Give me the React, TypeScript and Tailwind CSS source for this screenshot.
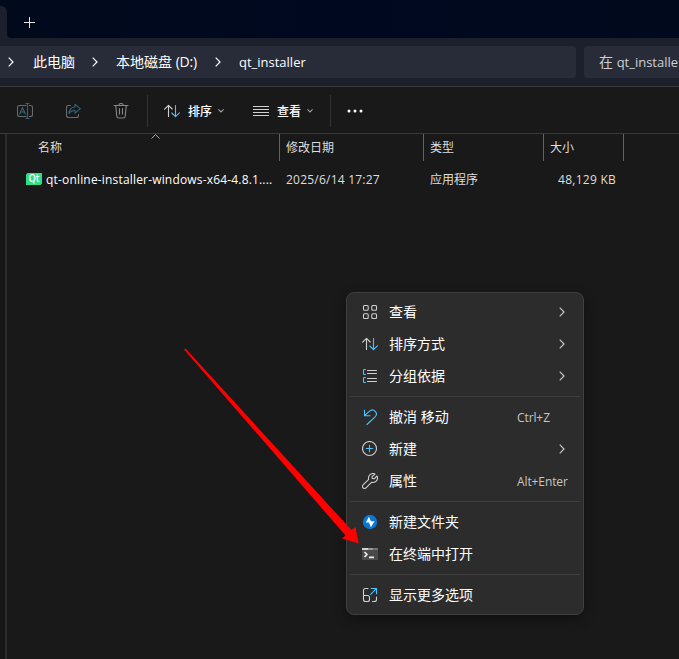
import type { ReactNode } from 'react';

interface MenuItemProps {
  icon: ReactNode;
  label: string;
  shortcut?: string;
  submenu?: boolean;
}

function Chevron({ className }: { className?: string }) {
  return (
    <svg className={className} width="6" height="10" viewBox="0 0 6 10" fill="none" stroke="currentColor" strokeWidth="1.2">
      <path d="M0.7 0.7L5 5L0.7 9.3" />
    </svg>
  );
}

function ChevronDown() {
  return (
    <svg className="ml-1.5 text-[#a0a0a0]" width="6" height="4" viewBox="0 0 6 4" fill="none" stroke="currentColor" strokeWidth="1.1">
      <path d="M0.4 0.4L3 3L5.6 0.4" />
    </svg>
  );
}

function Icon({ children, className }: { children: ReactNode; className?: string }) {
  return (
    <svg
      className={`shrink-0 ${className ?? ''}`}
      width="16"
      height="16"
      viewBox="0 0 16 16"
      fill="none"
      stroke="#d0d0d0"
      strokeWidth="1.1"
      strokeLinecap="round"
      strokeLinejoin="round"
    >
      {children}
    </svg>
  );
}

function SortIcon({ className }: { className?: string }) {
  return (
    <Icon className={className}>
      <path d="M4.5 13.5V2.3M0.6 6.2L4.5 2.3L8.2 6" />
      <path d="M11.5 2.5V13.7M7.8 10L11.5 13.7L15.4 9.8" stroke="#4cc2ff" />
    </Icon>
  );
}

function MenuItem({ icon, label, shortcut, submenu }: MenuItemProps) {
  return (
    <div className="flex h-8 items-center pl-[15px] pr-[18px] text-white">
      {icon}
      <span className="ml-[11px] whitespace-nowrap text-sm leading-5">{label}</span>
      {shortcut && (
        <span className="-mr-0.5 ml-auto w-[50px] whitespace-nowrap pt-px text-xs tracking-[-0.1px] text-[#c6c6c6]">{shortcut}</span>
      )}
      {submenu && <Chevron className="ml-auto text-[#c6c6c6]" />}
    </div>
  );
}

function Separator() {
  return <div className="mx-[3px] my-1 h-px bg-[#3f3f3f]" />;
}

function ContextMenu() {
  return (
    <div className="absolute left-[346px] top-[292px] w-[238px] rounded-lg border border-[#404040] bg-[#2c2c2c] py-[3px] shadow-[0_4px_12px_rgba(0,0,0,0.35)]">
      <MenuItem
        label="查看"
        submenu
        icon={
          <Icon>
            <rect x="1.5" y="1.5" width="4.7" height="4.7" rx="1" />
            <rect x="9.8" y="1.5" width="4.7" height="4.7" rx="1" />
            <rect x="1.5" y="9.8" width="4.7" height="4.7" rx="1" />
            <rect x="9.8" y="9.8" width="4.7" height="4.7" rx="1" />
          </Icon>
        }
      />
      <MenuItem label="排序方式" submenu icon={<SortIcon />} />
      <MenuItem
        label="分组依据"
        submenu
        icon={
          <Icon>
            <path d="M5.5 2.5H14.5M5.5 5.5H14.5M5.5 10.5H14.5M5.5 13.5H14.5" />
            <path d="M3.5 1.5H2.3Q1.5 1.5 1.5 2.3V5.7Q1.5 6.5 2.3 6.5H3.5M3.5 9.5H2.3Q1.5 9.5 1.5 10.3V13.7Q1.5 14.5 2.3 14.5H3.5" stroke="#4cc2ff" />
          </Icon>
        }
      />
      <Separator />
      <MenuItem
        label="撤消 移动"
        shortcut="Ctrl+Z"
        icon={
          <Icon>
            <path d="M2.5 1.2V6.7H8M2.8 6.3L7.2 2.3C9.2 0.5 11.7 0.7 13.2 2.3C14.8 4 14.7 6.3 13.1 7.9L5 15.5" stroke="#4cc2ff" />
          </Icon>
        }
      />
      <MenuItem
        label="新建"
        submenu
        icon={
          <Icon>
            <circle cx="7.5" cy="7.5" r="7" />
            <path d="M7.5 4.3V10.7M4.3 7.5H10.7" stroke="#4cc2ff" />
          </Icon>
        }
      />
      <MenuItem
        label="属性"
        shortcut="Alt+Enter"
        icon={
          <Icon>
            <path d="M13 1.1A4.4 4.4 0 0 0 6.7 6.3L1.1 11.9A2 2 0 0 0 4 14.9L9.7 9.2A4.4 4.4 0 0 0 15 3L12.1 5.8L10.2 5.4L9.9 3.9Z" />
          </Icon>
        }
      />
      <Separator />
      <MenuItem
        label="新建文件夹"
        icon={
          <Icon>
            <circle cx="8" cy="8" r="7.2" fill="#0878d4" stroke="none" />
            <path d="M7 2.8L3.8 8.6H7L8.9 13.2L12.5 7.3H9Z" fill="#fff" stroke="none" />
          </Icon>
        }
      />
      <MenuItem
        label="在终端中打开"
        icon={
          <Icon>
            <g stroke="none">
              <path d="M0 2H16V14H0Z" fill="#4a4a4a" />
              <path d="M0 2H6V4H0Z" fill="#d0d0d0" />
              <path d="M6 2H11V4H6Z" fill="#999" />
              <path d="M11 2H16V4H11Z" fill="#707070" />
            </g>
            <path d="M2.5 6L5 8.5L2.5 11M7 11.3H12" stroke="#eee" strokeWidth="1.7" strokeLinecap="butt" />
          </Icon>
        }
      />
      <Separator />
      <MenuItem
        label="显示更多选项"
        icon={
          <Icon>
            <path d="M6 1.5H3.5Q1.5 1.5 1.5 3.5V12.5Q1.5 14.5 3.5 14.5H5.5Q7.5 14.5 7.5 12.5V10.5Q7.5 8.5 5.5 8.5H1.5M14.5 10V12.5Q14.5 14.5 12.5 14.5H10.5" />
            <path d="M9.2 1.5H14.5V6.8M14.3 1.7L8.7 7.3" stroke="#4cc2ff" />
          </Icon>
        }
      />
    </div>
  );
}

function TitleBar() {
  return (
    <div className="flex h-[38px] bg-[#1b202c]">
      <div className="h-full w-[7px] bg-[#000a1b] pt-1.5">
        <div className="h-8 rounded-tr-[6px] bg-[#1b202c]" />
      </div>
      <div className="flex h-full flex-1 rounded-bl-[4px] bg-linear-to-r from-[#000a1b] via-[#000820] to-[#000a1c] pl-[17px] pt-[17px]">
        <svg width="11" height="11" viewBox="0 0 11 11" stroke="#e8e8e8">
          <path d="M5.5 0V11M0 5.5H11" />
        </svg>
      </div>
    </div>
  );
}

function AddressBar() {
  return (
    <div className="flex h-12 gap-2 bg-[#1b202c] py-2">
      <div className="flex h-8 w-[576px] shrink-0 items-center rounded-r-[4px] bg-[#272c38] pl-2 text-sm text-white">
        <Chevron />
        <span className="ml-[19px] w-[59px]">此电脑</span>
        <Chevron />
        <span className="ml-[18px] w-[99px] whitespace-nowrap">
          本地磁盘 <span className="tracking-[-0.2px]">(D:)</span>
        </span>
        <Chevron />
        <span className="ml-[18px] text-[13px]">qt_installer</span>
      </div>
      <div className="flex h-8 flex-1 items-center rounded-l-[4px] bg-[#272c38] pl-[15px] text-[#cfd0d4]">
        <span className="whitespace-nowrap text-sm">
          在 <span className="text-[13px]">qt_installe</span>
        </span>
      </div>
    </div>
  );
}

function Toolbar() {
  return (
    <div className="flex h-12 items-center border-b border-t border-[#3a3a3d] bg-[#191919] pl-[17px] pt-0.5 text-xs text-white">
      <Icon className="opacity-45">
        <path d="M9 2.5H2.5Q0.5 2.5 0.5 4.5V11.5Q0.5 13.5 2.5 13.5H9M12.5 2.5H13.5Q15.5 2.5 15.5 4.5V11.5Q15.5 13.5 13.5 13.5H12.5" />
        <path d="M2.7 11L5.5 4.5L8.3 11M3.6 9H7.4M10.5 0.5V15.5M9 0.5H12M9 15.5H12" stroke="#4cc2ff" />
      </Icon>
      <Icon className="ml-8 opacity-45">
        <path d="M5.5 2.5H3.5Q1.5 2.5 1.5 4.5V12.5Q1.5 14.5 3.5 14.5H11.5Q13.5 14.5 13.5 12.5V11.5" />
        <path d="M10 1.3L15.3 5.7L10 10.2V7.6Q6.2 7.3 4 10.5Q4.3 4.5 10 4Z" stroke="#4cc2ff" />
      </Icon>
      <Icon className="ml-8 opacity-60">
        <path d="M1 2.5H15M2.7 2.5L3.8 13.3Q4 15 5.5 15H10.5Q12 15 12.2 13.3L13.3 2.5M5.8 2.3Q5.8 0.5 8 0.5Q10.2 0.5 10.2 2.3M6.5 5.5V11M9.5 5.5V11" />
      </Icon>
      <div className="ml-[18px] h-8 w-px bg-[#333]" />
      <SortIcon className="ml-4" />
      <span className="ml-2 pt-0.5 font-medium">排序</span>
      <ChevronDown />
      <svg className="ml-[29px]" width="16" height="12" viewBox="0 0 16 12" stroke="#d0d0d0">
        <path d="M0 1.5H16M0 4.5H16M0 7.5H16M0 10.5H16" />
      </svg>
      <span className="ml-2 pt-0.5 font-medium">查看</span>
      <ChevronDown />
      <div className="ml-[17px] h-8 w-px bg-[#333]" />
      <svg className="ml-4" width="16" height="4" viewBox="0 0 16 4" fill="#fff">
        <circle cx="2" cy="2" r="1.5" />
        <circle cx="8" cy="2" r="1.5" />
        <circle cx="14" cy="2" r="1.5" />
      </svg>
    </div>
  );
}

function FileList() {
  return (
    <div className="min-h-0 flex-1 border-l-[5px] border-[#171717] bg-[#191919] text-xs">
      <div className="h-full border-l-2 border-[#2c2c2c]">
        <div className="flex h-[27px] items-center text-[#dedede]">
          <div className="relative flex h-full w-[273px] items-center border-r border-[#636363] pl-[31px]">
            名称
            <svg className="absolute left-[144px] top-0" width="9" height="5" viewBox="0 0 9 5" fill="none" stroke="#a8a8a8">
              <path d="M0.5 4.5L4.5 0.5L8.5 4.5" />
            </svg>
          </div>
          <div className="flex h-full w-36 items-center border-r border-[#636363] pl-1.5">修改日期</div>
          <div className="flex h-full w-[120px] items-center border-r border-[#636363] pl-1.5">类型</div>
          <div className="flex h-full w-20 items-center border-r border-[#636363] pl-1.5">大小</div>
        </div>
        <div className="mt-2 flex h-[22px] items-center whitespace-nowrap text-[#dedede]">
          <div className="flex w-[273px] items-center pl-[19px] text-white">
            <svg className="-mt-0.5" width="16" height="12" viewBox="0 0 16 12">
              <path d="M1.5 0H16V10.5L14.5 12H0V1.5Z" fill="#2cde85" />
              <text x="2.5" y="9.3" fill="#fff" fontSize="10" fontWeight="600" fontFamily="Open Sans, sans-serif" textLength="11" lengthAdjust="spacingAndGlyphs">
                Qt
              </text>
            </svg>
            <span className="ml-1 tracking-[0.175px]">qt-online-installer-windows-x64-4.8.1....</span>
          </div>
          <div className="w-36 pl-1.5 tracking-[0.22px]">2025/6/14 17:27</div>
          <div className="w-[120px] pl-1.5">应用程序</div>
          <div className="w-[72px] text-right tracking-[0.25px]">48,129 KB</div>
        </div>
      </div>
    </div>
  );
}

export default function App() {
  return (
    <div className="relative flex h-[659px] w-[679px] flex-col overflow-hidden bg-[#191919] font-['Open_Sans','Noto_Sans_CJK_SC',sans-serif]">
      <TitleBar />
      <AddressBar />
      <Toolbar />
      <FileList />
      <ContextMenu />
      <svg className="absolute left-[184px] top-[348px]" width="176" height="197" viewBox="0 0 176 197" fill="#f00">
        <path d="M0 1.5L1.5 0.5L167.5 182L171.5 179L174.7 195.5L158 190.5L161.5 187.5Z" />
      </svg>
    </div>
  );
}
